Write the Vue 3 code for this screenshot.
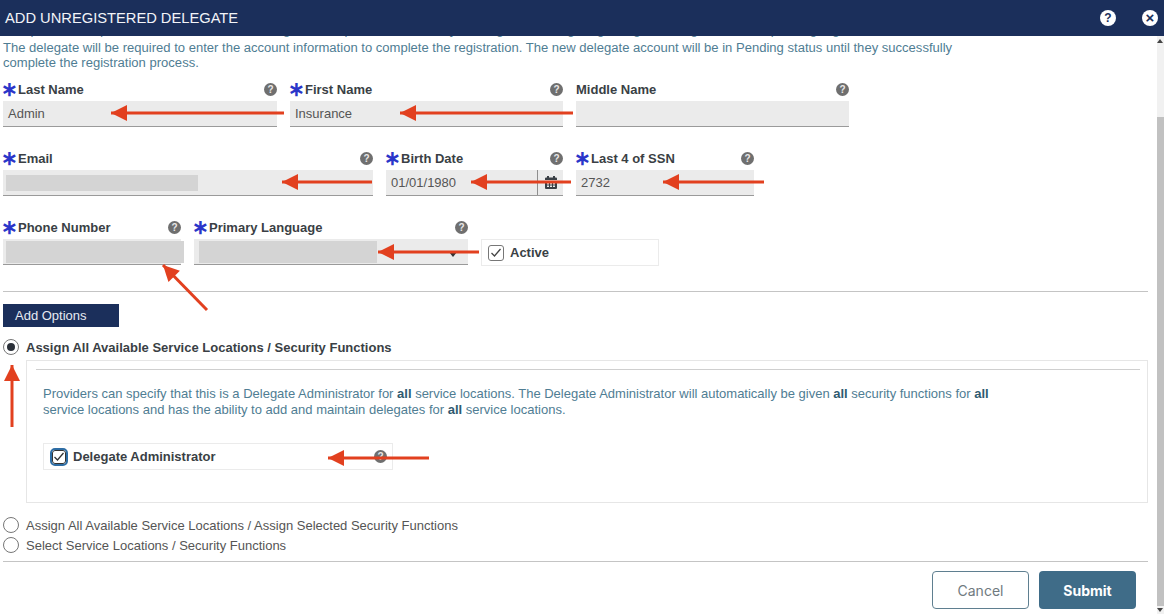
<template>
  <div class="modal">
    <header class="modal-header">
      <h1 class="modal-title">ADD UNREGISTERED DELEGATE</h1>
      <div class="header-actions">
        <button class="round-btn">?</button>
        <button class="round-btn close">×</button>
      </div>
    </header>

    <div class="modal-body">
      <div class="content">
        <p class="intro">
          <span class="cut-line">Complete the required fields below to add a delegate, then press Submit and you will get a message regarding the delegate's status, pending registration.</span>
          The delegate will be required to enter the account information to complete the registration. The new delegate account will be in Pending status until they successfully complete the registration process.
        </p>

        <div v-for="(row, i) in rows" :key="i" class="form-row">
          <div v-for="f in row" :key="f.label" class="field" :style="{ width: f.width + 'px' }">
            <div class="field-label">
              <span class="label-text"><span v-if="f.required" class="req">∗</span>{{ f.label }}</span>
              <span class="help">?</span>
            </div>
            <div class="input">
              <span v-if="f.value" class="input-value">{{ f.value }}</span>
              <span
                v-if="f.blur"
                class="redact"
                :style="{ width: f.blur[0] + 'px', height: f.blur[1] + 'px', marginLeft: f.blur[2] + 'px' }"
              ></span>
              <span v-if="f.type === 'date'" class="cal">
                <svg width="12" height="13" viewBox="0 0 12 13">
                  <path fill="#3a3f45" d="M2 0h2v1.500h4V0h2v1.500h1a1 1 0 0 1 1 1V4H0V2.500a1 1 0 0 1 1-1h1zM0 5h12v7a1 1 0 0 1-1 1H1a1 1 0 0 1-1-1zm2 2v1.500h2V7zm3 0v1.500h2V7zm3 0v1.500h2V7zM2 9.500V11h2V9.500zm3 0V11h2V9.500zm3 0V11h2V9.500z" />
                </svg>
              </span>
              <span v-if="f.type === 'select'" class="caret"></span>
            </div>
          </div>
          <label v-if="i === 2" class="check-box active-box">
            <span class="check">
              <svg width="12" height="10" viewBox="0 0 12 10"><path d="M1.500 5l3 3 6-7" fill="none" stroke="#444" stroke-width="1.300" /></svg>
            </span>
            Active
          </label>
        </div>

        <hr class="rule first-rule" />

        <div class="options-tab">Add Options</div>

        <div class="radio-row strong">
          <span class="radio on"></span>
          Assign All Available Service Locations / Security Functions
        </div>

        <section class="panel">
          <div class="panel-rule"></div>
          <p class="panel-text">
            Providers can specify that this is a Delegate Administrator for <b>all</b> service locations. The Delegate Administrator will automatically be given <b>all</b> security functions for <b>all</b> service locations and has the ability to add and maintain delegates for <b>all</b> service locations.
          </p>
          <label class="check-box admin-box">
            <span class="check focused">
              <svg width="12" height="10" viewBox="0 0 12 10"><path d="M1.500 5l3 3 6-7" fill="none" stroke="#333" stroke-width="1.300" /></svg>
            </span>
            Delegate Administrator
            <span class="help admin-help">?</span>
          </label>
        </section>

        <div class="radio-row">
          <span class="radio"></span>
          Assign All Available Service Locations / Assign Selected Security Functions
        </div>
        <div class="radio-row second">
          <span class="radio"></span>
          Select Service Locations / Security Functions
        </div>

        <hr class="rule last-rule" />

        <footer class="actions">
          <button class="btn cancel">Cancel</button>
          <button class="btn submit">Submit</button>
        </footer>
      </div>

      <div class="scrollbar">
        <span class="arrow up"></span>
        <span class="thumb"></span>
        <span class="arrow down"></span>
      </div>
    </div>

    <!-- annotation arrows drawn on top of the form -->
    <svg class="annotations" width="1164" height="614" viewBox="0 0 1164 614">
      <g v-for="(a, i) in arrows" :key="i">
        <line :x1="a[0]" :y1="a[1]" :x2="a[2]" :y2="a[3]" stroke="#e2401f" stroke-width="3" />
        <polygon :points="head(a)" fill="#e2401f" />
      </g>
    </svg>
  </div>
</template>

<script setup>
// blur: [width, height, left offset] of the grey box hiding the value
const rows = [
  [
    { label: 'Last Name', required: true, value: 'Admin', width: 274 },
    { label: 'First Name', required: true, value: 'Insurance', width: 273 },
    { label: 'Middle Name', width: 273 }
  ],
  [
    { label: 'Email', required: true, blur: [192, 16, -2], width: 370 },
    { label: 'Birth Date', required: true, value: '01/01/1980', type: 'date', width: 177 },
    { label: 'Last 4 of SSN', required: true, value: '2732', width: 178 }
  ],
  [
    { label: 'Phone Number', required: true, blur: [178, 22, -2], width: 178 },
    { label: 'Primary Language', required: true, blur: [178, 22, 0], type: 'select', width: 274 }
  ]
]

// x1, y1 (tail), x2, y2 (tip)
const arrows = [
  [284, 113, 111, 113],
  [573, 113, 400, 113],
  [372, 182, 282, 182],
  [571, 182, 471, 182],
  [764, 182, 663, 182],
  [479, 252, 378, 252],
  [207, 310, 163, 265],
  [12, 427, 12, 365],
  [429, 458, 328, 458]
]

const head = ([x1, y1, x2, y2]) => {
  const len = Math.hypot(x2 - x1, y2 - y1)
  const ux = (x2 - x1) / len
  const uy = (y2 - y1) / len
  const bx = x2 - ux * 16
  const by = y2 - uy * 16
  return `${x2},${y2} ${bx - uy * 8},${by + ux * 8} ${bx + uy * 8},${by - ux * 8}`
}
</script>

<style>
html, body {
  margin: 0;
  background: #fff;
  overflow: hidden;
}
</style>

<style scoped>
.modal {
  position: relative;
  width: 1164px;
  height: 614px;
  overflow: hidden;
  font-family: "Liberation Sans", Arial, sans-serif;
  font-size: 13px;
  color: #333;
}

.modal-header {
  display: flex;
  justify-content: space-between;
  align-items: center;
  height: 36px;
  padding: 0 6px 0 5px;
  background: #1b2f5b;
  box-sizing: border-box;
  position: relative;
  z-index: 1;
}

.modal-title {
  margin: 0;
  font-size: 14.700px;
  font-weight: 400;
  color: #f2f4f8;
}

.header-actions {
  display: flex;
  gap: 26px;
  align-items: center;
}

.round-btn {
  width: 16px;
  height: 16px;
  padding: 0;
  border: 0;
  border-radius: 50%;
  background: #fff;
  color: #1b2f5b;
  font: bold 12px/16px "Liberation Sans", sans-serif;
}

.round-btn.close {
  font-size: 15px;
}

.modal-body {
  display: flex;
  height: 578px;
  overflow: hidden;
}

.content {
  width: 1157px;
  padding: 0 9px 0 3px;
  box-sizing: border-box;
}

.intro {
  width: 960px;
  margin: -14px 0 0;
  font-size: 13.050px;
  line-height: 15px;
  color: #4f7d93;
}

.cut-line {
  display: block;
  margin-bottom: 3px;
  white-space: nowrap;
  overflow: hidden;
}

.form-row {
  display: flex;
  align-items: flex-end;
  gap: 13px;
  margin-top: -1px;
  height: 58px;
}

.form-row + .form-row {
  margin-top: 11px;
}

.field-label {
  display: flex;
  justify-content: space-between;
  align-items: center;
  height: 24px;
  font-weight: 700;
  color: #3a3f45;
}

.label-text {
  display: flex;
  align-items: center;
}

.req {
  width: 17px;
  margin-left: -2px;
  color: #2a35c9;
  font-size: 20px;
  line-height: 16px;
  font-weight: 700;
}

.help {
  width: 13px;
  height: 13px;
  border-radius: 50%;
  background: #6f6f6f;
  color: #e8e8e8;
  font-size: 10px;
  font-weight: 700;
  line-height: 13px;
  text-align: center;
}

.input {
  display: flex;
  align-items: center;
  position: relative;
  height: 26px;
  padding-left: 5px;
  box-sizing: border-box;
  background: #ebebeb;
  border-bottom: 1px solid #9a9a9a;
  color: #555;
  font-size: 13px;
}

.redact {
  display: block;
  flex: none;
  background: #d4d4d4;
}

.cal {
  position: absolute;
  right: 0;
  top: 0;
  bottom: 0;
  width: 25px;
  border-left: 1px solid #8e8e8e;
  display: flex;
  align-items: center;
  justify-content: center;
}

.caret {
  position: absolute;
  right: 11px;
  top: 13px;
  border: 4px solid transparent;
  border-top: 5px solid #333;
}

.check-box {
  display: flex;
  align-items: center;
  box-sizing: border-box;
  border: 1px solid #ebebeb;
  font-weight: 700;
  color: #3a3f45;
}

.active-box {
  width: 178px;
  height: 27px;
  margin-bottom: -1px;
  padding-left: 6px;
  gap: 6px;
}

.check {
  display: flex;
  align-items: center;
  justify-content: center;
  width: 16px;
  height: 16px;
  border: 1px solid #777;
  border-radius: 3px;
  box-sizing: border-box;
  background: #fff;
}

.check.focused {
  width: 14px;
  height: 14px;
  border: 1px solid #333;
  outline: 2px solid #2e6da4;
}

.rule {
  margin: 0;
  border: 0;
  height: 1px;
  background: #c4c4c4;
}

.first-rule {
  margin-top: 26px;
}

.options-tab {
  width: 116px;
  height: 23px;
  margin-top: 12px;
  padding-left: 12px;
  box-sizing: border-box;
  background: #1b2f5b;
  color: #e6eaf2;
  font-size: 13px;
  line-height: 23px;
}

.radio-row {
  display: flex;
  align-items: center;
  gap: 7px;
  height: 20px;
  color: #555;
}

.radio-row.strong {
  margin-top: 10px;
  font-weight: 700;
  color: #3a3f45;
}

.radio {
  flex: none;
  width: 14px;
  height: 14px;
  border: 1px solid #777;
  border-radius: 50%;
  background: #fff;
  position: relative;
}

.radio.on::after {
  content: '';
  position: absolute;
  left: 3px;
  top: 3px;
  width: 8px;
  height: 8px;
  border-radius: 50%;
  background: #2a2f38;
}

.panel {
  margin: 3px 0 12px 23px;
  height: 143px;
  padding: 8px 7px 0 9px;
  box-sizing: border-box;
  border: 1px solid #e6e6e6;
}

.panel-rule {
  height: 1px;
  background: #cfcfcf;
}

.panel-text {
  width: 960px;
  margin: 16px 0 0 7px;
  font-size: 13px;
  line-height: 16px;
  color: #4f7d93;
}

.panel-text b {
  color: #2f5a70;
}

.admin-box {
  width: 350px;
  height: 27px;
  margin: 25px 0 0 7px;
  padding-left: 8px;
  gap: 7px;
}

.admin-help {
  margin-left: auto;
  margin-right: 5px;
}

.last-rule {
  margin-top: 6px;
}

.actions {
  display: flex;
  justify-content: flex-end;
  gap: 10px;
  margin-top: 9px;
  padding-right: 12px;
}

.btn {
  width: 97px;
  height: 38px;
  border-radius: 4px;
  font-family: Inter, "Noto Sans", sans-serif;
  font-size: 14px;
}

.cancel {
  border: 1px solid #5f7f90;
  background: #fff;
  color: #707a80;
}

.submit {
  border: 0;
  background: #3f6c88;
  color: #fff;
  font-weight: 700;
}

.scrollbar {
  flex: none;
  width: 7px;
  display: flex;
  flex-direction: column;
  background: #f1f1f1;
}

.thumb {
  flex: 1;
  margin: 75px 0 2px;
  background: #c1c1c1;
}

.arrow {
  height: 6px;
  position: relative;
}

.arrow.up::after {
  content: '';
  position: absolute;
  left: 0;
  top: 3px;
  border: 3px solid transparent;
  border-top: 0;
  border-bottom: 4px solid #444;
}

.arrow.down::after {
  content: '';
  position: absolute;
  left: 0;
  top: 0;
  border: 3px solid transparent;
  border-bottom: 0;
  border-top: 4px solid #444;
}

.annotations {
  position: absolute;
  left: 0;
  top: 0;
  pointer-events: none;
}
</style>
